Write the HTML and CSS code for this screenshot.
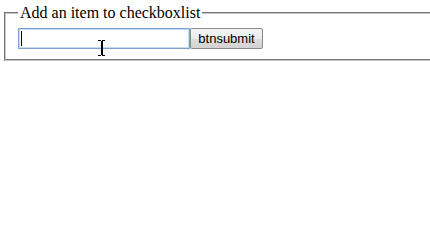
FILE: index.html
```html
<!DOCTYPE html>
<html>
<head>
<meta charset="utf-8">
<link rel="stylesheet" href="styles.css">
</head>
<body>
<form class="page">
  <fieldset class="group">
    <legend class="group-title">Add an item to checkboxlist</legend>
    <div class="row">
      <div class="field">
        <input class="item-input" type="text" value="">
        <span class="caret"></span>
      </div>
      <button class="submit" type="button">btnsubmit</button>
    </div>
  </fieldset>
  <svg class="ibeam" width="9" height="16" viewBox="0 0 9 16" aria-hidden="true">
    <path d="M1 0.5h3M5 0.5h3M4 1v14M5 1v14M1 15.5h3M5 15.5h3" stroke="#000" stroke-width="1" fill="none" shape-rendering="crispEdges"/>
  </svg>
</form>
</body>
</html>
```
FILE: styles.css
```css
html, body {
  margin: 0;
  padding: 0;
  overflow: hidden;
  background: #fff;
}
.page {
  position: relative;
  width: 430px;
  height: 226px;
}
.group {
  margin: 4px -20px 0 4px;
  padding: 6px 12px 10px 12px;
  border: 2px groove #c8c8c8;
  min-width: 0;
}
.group-title {
  padding: 0 2px;
  font-family: "Liberation Serif", "Times New Roman", serif;
  font-size: 16px;
  line-height: 18px;
  color: #000;
}
.row {
  display: flex;
  align-items: flex-start;
}
.field {
  position: relative;
}
.item-input {
  display: block;
  box-sizing: border-box;
  width: 172px;
  height: 21px;
  margin: 0;
  padding: 1px 2px;
  border: 1px solid #7da2ce;
  box-shadow: inset 0 0 0 1px #c5daf3;
  outline: none;
  font-family: "Liberation Sans", Arial, sans-serif;
  font-size: 13px;
}
.caret {
  position: absolute;
  left: 3px;
  top: 3px;
  width: 1px;
  height: 15px;
  background: #000;
}
.submit {
  box-sizing: border-box;
  width: 73px;
  height: 21px;
  margin: 0;
  padding: 0;
  border: 1px solid #8a8a8a;
  border-radius: 2px;
  background: linear-gradient(#f4f4f4 0%, #ececec 50%, #dedede 51%, #d2d2d2 100%);
  font-family: "Liberation Sans", Arial, sans-serif;
  font-size: 13px;
  color: #000;
}
.ibeam {
  position: absolute;
  left: 97px;
  top: 36px;
}
```
